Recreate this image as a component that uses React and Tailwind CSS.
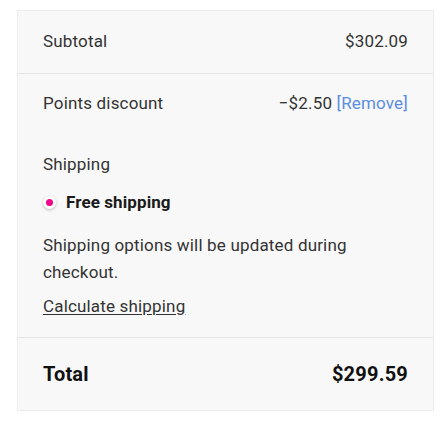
export default function App() {
  return (
    <div className="w-[441px] h-[424px] bg-white pt-[10px] pl-[17px]" style={{ fontFamily: "Roboto, 'Liberation Sans', sans-serif" }}>
      <div className="w-[417px] border border-[#ebebeb] bg-[#f8f8f8] text-[#333] text-[17px] leading-[24px] tracking-[0.17px]">
        <div className="flex justify-between px-[25px] pt-[18px] pb-[20px] border-b border-[#e6e6e6]">
          <span>Subtotal</span>
          <span>$302.09</span>
        </div>
        <div className="px-[25px] pb-[19px]">
          <div className="flex justify-between pt-[17px] pb-[20px]">
            <span>Points discount</span>
            <span>
              −$2.50 <span className="text-[#5b8de0]">[Remove]</span>
            </span>
          </div>
          <div className="mt-[17px]">Shipping</div>
          <div className="mt-[14px] flex items-center">
            <span className="w-[13px] h-[13px] rounded-full bg-white shadow-[0_1px_3px_rgba(0,0,0,0.25)] flex items-center justify-center">
              <span className="w-[7px] h-[7px] rounded-full bg-[#f0068a]" />
            </span>
            <span className="ml-[10px] font-bold text-[#1a1a1a] tracking-[0.1px]">Free shipping</span>
          </div>
          <p className="mt-[18px] leading-[27px]">Shipping options will be updated during checkout.</p>
          <div className="mt-[8px]">
            <a className="underline underline-offset-2">Calculate shipping</a>
          </div>
        </div>
        <div className="flex justify-between items-center px-[25px] h-[73px] border-t border-[#e6e6e6] font-bold text-[20px] text-[#111] tracking-[0.2px]">
          <span>Total</span>
          <span>$299.59</span>
        </div>
      </div>
    </div>
  );
}
